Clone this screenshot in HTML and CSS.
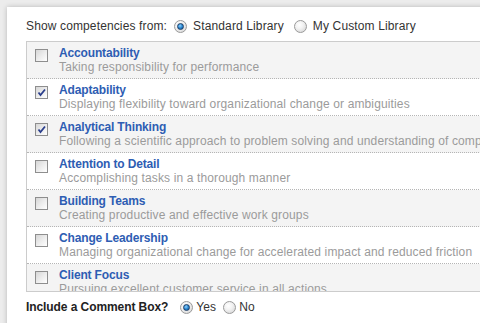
FILE: index.html
```html
<!DOCTYPE html>
<html>
<head>
<meta charset="utf-8">
<link rel="stylesheet" href="styles.css">
</head>
<body>
<div class="panel">
  <div class="source">
    <span class="label">Show competencies from:</span>
    <span class="radio on"></span><span class="opt">Standard Library</span>
    <span class="radio second"></span><span class="opt">My Custom Library</span>
  </div>
  <div class="list">
    <div class="row alt">
      <span class="check"></span>
      <div class="info"><div class="title">Accountability</div><div class="desc">Taking responsibility for performance</div></div>
    </div>
    <div class="row">
      <span class="check"><svg viewBox="0 0 11 11" width="11" height="11"><path d="M2.5 5.5 L4.5 8 L9 2.5" fill="none" stroke="#2b3f8c" stroke-width="1.8"/></svg></span>
      <div class="info"><div class="title">Adaptability</div><div class="desc">Displaying flexibility toward organizational change or ambiguities</div></div>
    </div>
    <div class="row alt">
      <span class="check"><svg viewBox="0 0 11 11" width="11" height="11"><path d="M2.5 5.5 L4.5 8 L9 2.5" fill="none" stroke="#2b3f8c" stroke-width="1.8"/></svg></span>
      <div class="info"><div class="title">Analytical Thinking</div><div class="desc">Following a scientific approach to problem solving and understanding of complex issues</div></div>
    </div>
    <div class="row">
      <span class="check"></span>
      <div class="info"><div class="title">Attention to Detail</div><div class="desc">Accomplishing tasks in a thorough manner</div></div>
    </div>
    <div class="row alt">
      <span class="check"></span>
      <div class="info"><div class="title">Building Teams</div><div class="desc">Creating productive and effective work groups</div></div>
    </div>
    <div class="row">
      <span class="check"></span>
      <div class="info"><div class="title">Change Leadership</div><div class="desc">Managing organizational change for accelerated impact and reduced friction</div></div>
    </div>
    <div class="row alt">
      <span class="check"></span>
      <div class="info"><div class="title">Client Focus</div><div class="desc">Pursuing excellent customer service in all actions</div></div>
    </div>
  </div>
  <div class="comment">
    <span class="label bold">Include a Comment Box?</span>
    <span class="radio on"></span><span class="opt">Yes</span>
    <span class="radio second"></span><span class="opt">No</span>
  </div>
</div>
</body>
</html>
```
FILE: styles.css
```css
html, body {
  margin: 0;
  padding: 0;
  overflow: hidden;
}
body {
  width: 480px;
  height: 323px;
  background: #ececec;
  font-family: "Liberation Sans", Arial, sans-serif;
  font-size: 12px;
  color: #333;
}
.panel {
  margin: 7px 0 0 7px;
  height: 340px;
  width: 560px;
  background: #fff;
  box-shadow: 0 0 5px rgba(0,0,0,0.22);
  padding: 9px 0 0 19px;
  box-sizing: border-box;
}
.source, .comment {
  display: flex;
  align-items: center;
  height: 20px;
  white-space: nowrap;
}
.source .label, .opt, .desc {
  letter-spacing: 0.13px;
}
.source .radio {
  margin-left: 7px;
  margin-right: 6px;
}
.source .radio.second {
  margin-left: 10px;
}
.radio {
  position: relative;
  width: 11px;
  height: 11px;
  border-radius: 50%;
  border: 1px solid #9a9a9a;
  background: radial-gradient(circle at 40% 35%, #ffffff 0%, #f2f2f2 40%, #cfcfcf 100%);
  flex: none;
}
.radio.on::after {
  content: "";
  position: absolute;
  left: 2px;
  top: 2px;
  width: 5px;
  height: 5px;
  border-radius: 50%;
  border: 1px solid #1c3d66;
  background: radial-gradient(circle at 40% 35%, #8fd0ff 0%, #2a88d0 50%, #0b4f94 100%);
}
.list {
  margin-top: 5px;
  width: 520px;
  height: 249px;
  border: 1px solid #cccccc;
  overflow: hidden;
}
.row {
  display: flex;
  align-items: flex-start;
  padding: 4px 0;
  height: 28px;
  border-bottom: 1px dotted #b5b5b5;
  background: #fff;
  white-space: nowrap;
}
.row.alt {
  background: #f4f4f4;
}
.check {
  flex: none;
  display: flex;
  align-items: center;
  justify-content: center;
  width: 11px;
  height: 11px;
  margin: 3px 11px 0 8px;
  border: 1px solid #8e8e8e;
  background: linear-gradient(135deg, #d6d6d6 0%, #ececec 50%, #ffffff 100%);
}
.info {
  line-height: 14px;
}
.title {
  font-weight: bold;
  color: #2e5db3;
  letter-spacing: -0.15px;
}
.desc {
  color: #9b9b9b;
}
.comment {
  margin-top: 5px;
}
.label.bold {
  font-weight: bold;
  color: #222;
  letter-spacing: -0.08px;
}
.comment .radio {
  margin-left: 12px;
  margin-right: 3px;
}
.comment .radio.second {
  margin-left: 7px;
}
```
